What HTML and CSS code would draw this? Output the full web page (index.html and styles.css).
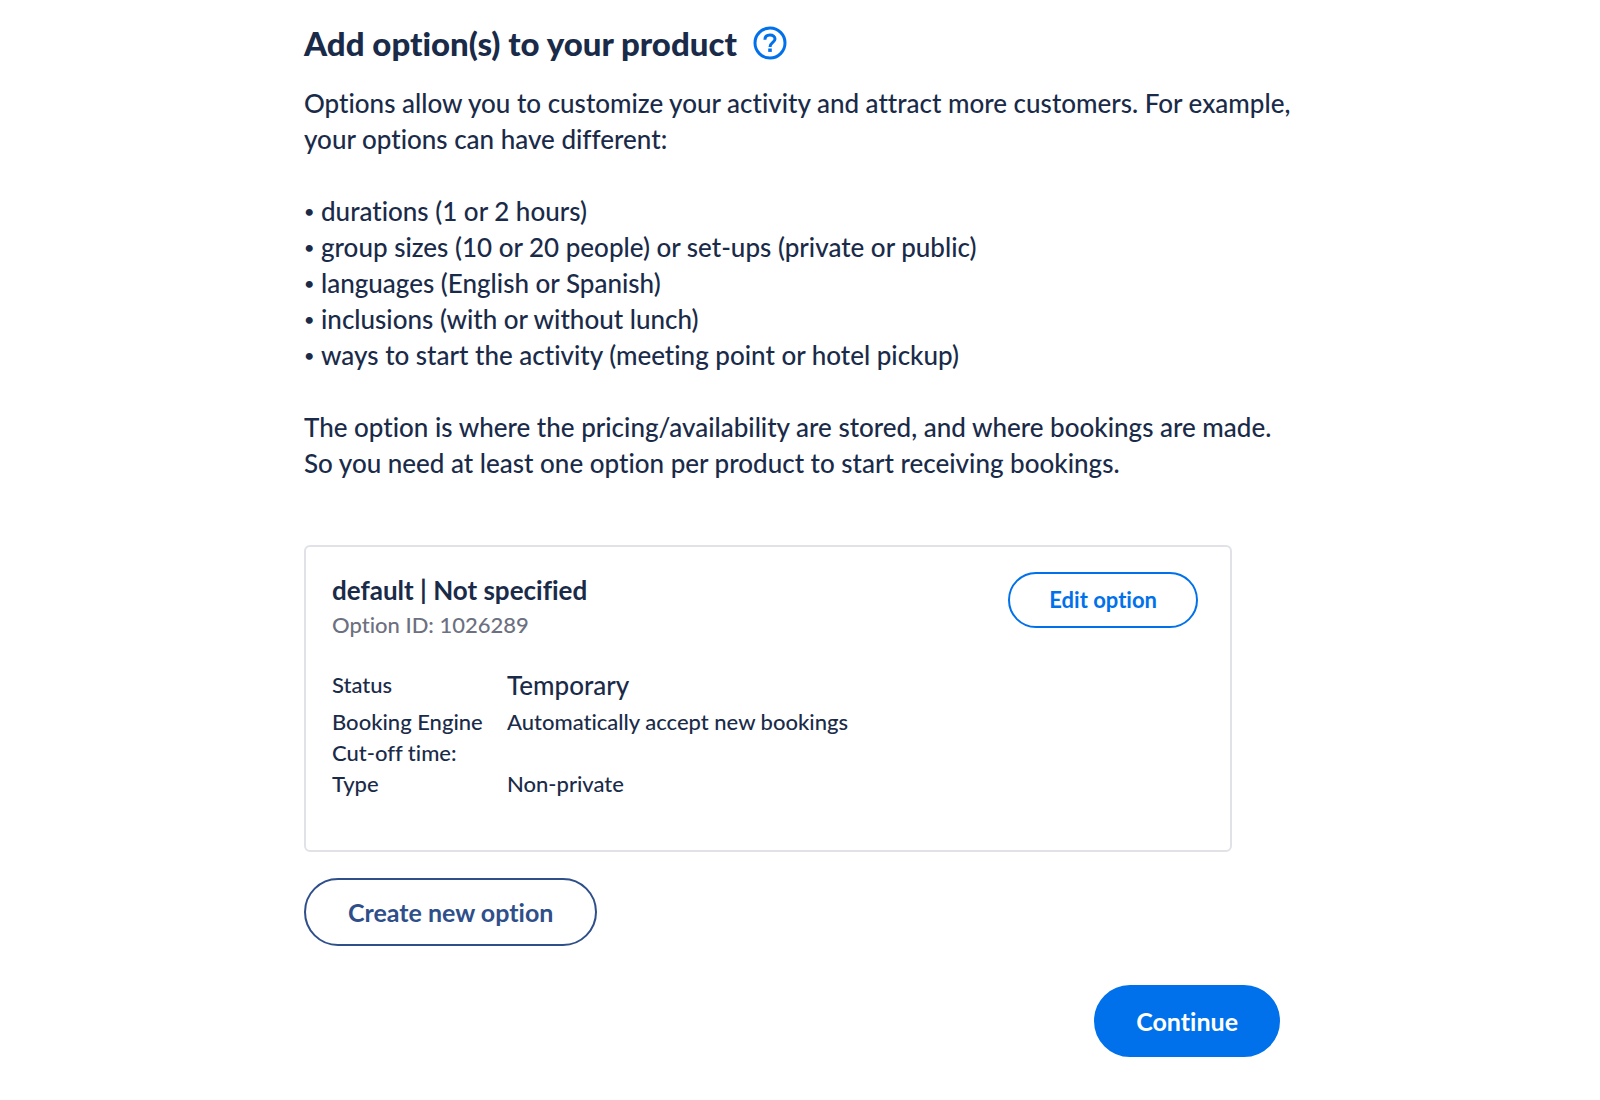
FILE: index.html
```html
<!DOCTYPE html>
<html lang="en">
<head>
    <meta charset="UTF-8">
    <meta name="viewport" content="width=device-width, initial-scale=1.0">
    <title>Add option(s) to your product</title>
    <link rel="stylesheet" href="styles.css">
</head>
<body>
    <main class="page">
        <header class="page-header">
            <h1>Add option(s) to your product</h1>
            <button type="button" class="help" aria-label="Help">
                <svg viewBox="0 0 34 34" fill="none" stroke="currentColor" stroke-width="3">
                    <circle cx="17" cy="17" r="15"/>
                    <path d="M11.9 13.8C11.9 10.6 14 8.9 17 8.9C20 8.9 22 10.6 22 13C22 16.4 17 16.6 17 21"/>
                    <path d="M15.2 24.2H18.8" stroke-width="3.4"/>
                </svg>
            </button>
        </header>

        <div class="intro">
            <p>Options allow you to customize your activity and attract more customers. For example,<br>your options can have different:</p>
            <ul>
                <li>durations (1 or 2 hours)</li>
                <li>group sizes (10 or 20 people) or set-ups (private or public)</li>
                <li>languages (English or Spanish)</li>
                <li>inclusions (with or without lunch)</li>
                <li>ways to start the activity (meeting point or hotel pickup)</li>
            </ul>
            <p>The option is where the pricing/availability are stored, and where bookings are made.<br>So you need at least one option per product to start receiving bookings.</p>
        </div>

        <section class="option-card">
            <div class="option-info">
                <h2>default | Not specified</h2>
                <p class="option-id">Option ID: 1026289</p>
                <dl class="details">
                    <dt class="status">Status</dt>
                    <dd class="status status-value">Temporary</dd>
                    <dt>Booking Engine</dt>
                    <dd>Automatically accept new bookings</dd>
                    <dt>Cut-off time:</dt>
                    <dd></dd>
                    <dt>Type</dt>
                    <dd>Non-private</dd>
                </dl>
            </div>
            <button type="button" class="btn btn-edit">Edit option</button>
        </section>

        <button type="button" class="btn btn-create">Create new option</button>

        <footer class="page-footer">
            <button type="submit" class="btn btn-continue">Continue</button>
        </footer>
    </main>
</body>
</html>
```
FILE: styles.css
```css
* {
    box-sizing: border-box;
}

body {
    margin: 0;
    background: #ffffff;
    color: #1a2b49;
    font-family: Lato, 'Open Sans', sans-serif;
    font-weight: 500;
    font-variant-ligatures: none;
}

h1,
h2,
p,
ul,
dl,
dd {
    margin: 0;
    padding: 0;
}

.page {
    padding: 23px 20% 40px 19%;
}

.page-header {
    display: flex;
    align-items: center;
    gap: 16px;
    margin-bottom: 22px;
}

h1 {
    font-size: 33px;
    line-height: 40px;
    font-weight: 900;
}

.help {
    width: 34px;
    height: 34px;
    padding: 0;
    border: none;
    background: none;
    color: #0071eb;
    cursor: pointer;
}

.help svg {
    display: block;
}

.intro {
    font-size: 26px;
    line-height: 36px;
}

.intro ul {
    margin: 36px 0;
    list-style: none;
}

.intro li {
    display: flex;
}

.intro li::before {
    content: "•";
    flex: 0 0 17px;
    font-size: 18px;
}

/* keep the hand-set line breaks on wide screens */
@media (min-width: 1500px) {
    .intro p {
        white-space: nowrap;
    }
}

.option-card {
    display: flex;
    justify-content: space-between;
    align-items: flex-start;
    margin: 64px 48px 26px 0;
    padding: 25px 32px 51px 26px;
    border: 2px solid #e1e2e7;
    border-radius: 6px;
}

h2 {
    font-size: 26px;
    line-height: 36px;
    font-weight: 700;
}

.option-id {
    font-size: 22px;
    line-height: 34px;
    color: #6c7080;
}

.details {
    display: grid;
    grid-template-columns: 155px auto;
    column-gap: 20px;
    margin-top: 22px;
    font-size: 22px;
    line-height: 31px;
}

.details dt {
    white-space: nowrap;
}

.details .status {
    line-height: 42px;
}

.details .status-value {
    font-size: 26px;
}

.btn {
    border: 2px solid currentColor;
    border-radius: 36px;
    background: #ffffff;
    font-family: inherit;
    font-size: 25px;
    line-height: 32px;
    font-weight: 700;
    font-variant-ligatures: none;
    cursor: pointer;
}

.btn-edit {
    padding: 10px 39px;
    font-size: 22px;
    color: #0071eb;
}

.btn-create {
    padding: 16px 42px;
    color: #2f4f8a;
}

.page-footer {
    display: flex;
    justify-content: flex-end;
    margin-top: 39px;
}

.btn-continue {
    padding: 18px 40px;
    border-color: #0071eb;
    background: #0071eb;
    color: #ffffff;
}
```
